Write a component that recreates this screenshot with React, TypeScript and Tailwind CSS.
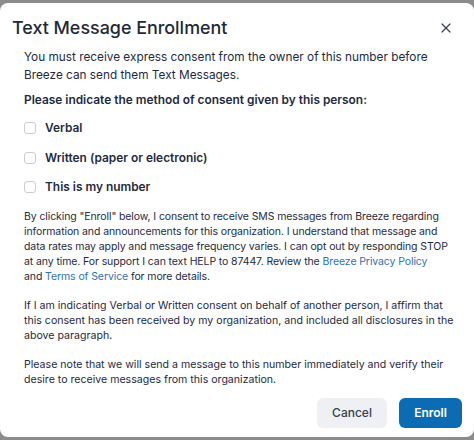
import { X } from "lucide-react";

const options = ["Verbal", "Written (paper or electronic)", "This is my number"];

export default function App() {
  return (
    <div className="min-h-screen bg-[#8c8c8c] pt-[3px] pb-[3px]" style={{ fontFamily: "Inter, 'Noto Sans', sans-serif" }}>
      <div className="bg-white rounded-lg h-[434px] text-[#1e2a3f]">
        <div className="flex items-center justify-between pl-3 pr-5 pt-[13px]">
          <h2 className="text-[17.9px] font-medium leading-[24px] text-[#1f2937]">Text Message Enrollment</h2>
          <X className="w-4 h-4 text-[#374151]" strokeWidth={1.8} />
        </div>

        <div className="pl-6 pr-5 pt-[8px]">
          <p className="text-[11.8px] leading-[18px]">
            You must receive express consent from the owner of this number before Breeze can send them Text Messages.
          </p>
          <p className="text-[11.9px] leading-[18px] font-semibold mt-[7px]">
            Please indicate the method of consent given by this person:
          </p>

          <div className="flex flex-col gap-[11.5px] mt-[10px]">
            {options.map((o) => (
              <label key={o} className="flex items-center gap-[9px] h-[18px]">
                <span className="w-[12px] h-[12px] rounded-[3px] border border-[#c9ced6] bg-white" />
                <span className="text-[11.9px] leading-[18px] font-semibold">{o}</span>
              </label>
            ))}
          </div>

          <div className="text-[10.6px] leading-[15px] mt-[12.5px] flex flex-col gap-[14px]">
            <p className="text-[10.5px] tracking-[-0.1px] -mr-3">
              By clicking "Enroll" below, I consent to receive SMS messages from Breeze regarding
              <br />
              information and announcements for this organization. I understand that message and
              <br />
              data rates may apply and message frequency varies. I can opt out by responding STOP
              <br />
              at any time. For support I can text HELP to 87447. Review the{" "}
              <a className="text-[#2d72b8]">Breeze Privacy Policy</a>
              <br />
              and <a className="text-[#2d72b8]">Terms of Service</a> for more details.
            </p>
            <p>
              If I am indicating Verbal or Written consent on behalf of another person, I affirm that this consent has
              been received by my organization, and included all disclosures in the above paragraph.
            </p>
            <p>
              Please note that we will send a message to this number immediately and verify their desire to receive
              messages from this organization.
            </p>
          </div>
        </div>

        <div className="flex justify-end gap-3 pr-3 mt-[11px]">
          <button className="h-[30px] w-[70px] rounded-md bg-[#eef0f3] text-[12px] font-medium text-[#374151]">
            Cancel
          </button>
          <button className="h-[30px] w-[63px] rounded-md bg-[#0b6cb4] text-[12px] font-semibold text-white">
            Enroll
          </button>
        </div>
      </div>
    </div>
  );
}
